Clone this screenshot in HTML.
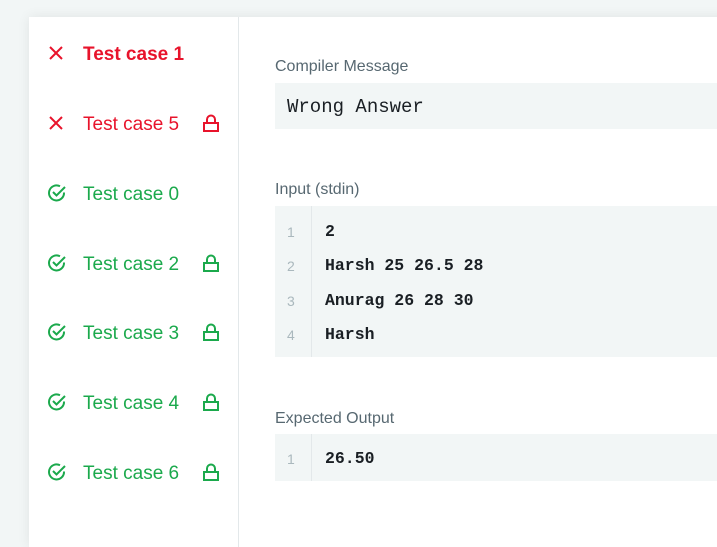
<!DOCTYPE html>
<html><head><style>
body{margin:0;width:717px;height:531px;background:#f2f6f6;font-family:"Liberation Sans",sans-serif;overflow:hidden;position:relative}
.card{position:absolute;left:29px;top:17px;width:700px;height:530px;background:#fff;box-shadow:0 0 12px rgba(0,0,0,.08)}
.side{position:absolute;left:0;top:0;width:209px;height:100%;border-right:1px solid #e3e8ea}
.row{position:absolute;left:0;height:30px;display:flex;align-items:center;font-size:19px}
.row svg.i{position:absolute;left:18px}
.row span{position:absolute;left:54px;top:6px;white-space:nowrap}
.row svg.l{position:absolute;left:173px}
.red{color:#e8132b}.grn{color:#1ba94c}
.lbl{position:absolute;left:246px;font-size:16px;color:#576871}
.box{position:absolute;left:246px;width:460px;background:#f2f6f6}
.mono{font-family:"Liberation Mono",monospace;font-weight:bold;font-size:16.5px;color:#1a1f24}
.ln{position:absolute;left:0;width:36px;border-right:1px solid #e3e8ea;height:100%}
.line{position:absolute;left:0;height:34px;line-height:34px;width:100%}
.line b{position:absolute;left:12px;font-family:"Liberation Sans",sans-serif;font-weight:normal;font-size:14px;color:#aab8bd}
.line i{position:absolute;left:50px;font-style:normal}
</style></head><body>
<div class="card">
<div class="side">
<div class="row red" style="top:21px"><svg class="i" width="18" height="18" viewBox="0 0 18 18"><path d="M3 3L15 15M15 3L3 15" stroke="#e8132b" stroke-width="2"/></svg><span style="font-weight:bold">Test case 1</span></div>
<div class="row red" style="top:91px"><svg class="i" width="18" height="18" viewBox="0 0 18 18"><path d="M3 3L15 15M15 3L3 15" stroke="#e8132b" stroke-width="2"/></svg><span>Test case 5</span><svg class="l" width="18" height="20" viewBox="0 0 18 20"><path d="M5 10V6.5a4 4 0 0 1 8 0V10M2 10h14v8H2z" fill="none" stroke="#e8132b" stroke-width="2"/></svg></div>
<div class="row grn" style="top:161px"><svg class="i" width="20" height="20" viewBox="0 0 20 20"><path d="M17 9.5A7.5 7.5 0 1 1 13 3.3" fill="none" stroke="#1ba94c" stroke-width="2"/><path d="M6 9l3.5 3.5L18 4" fill="none" stroke="#1ba94c" stroke-width="2"/></svg><span>Test case 0</span></div>
<div class="row grn" style="top:231px"><svg class="i" width="20" height="20" viewBox="0 0 20 20"><path d="M17 9.5A7.5 7.5 0 1 1 13 3.3" fill="none" stroke="#1ba94c" stroke-width="2"/><path d="M6 9l3.5 3.5L18 4" fill="none" stroke="#1ba94c" stroke-width="2"/></svg><span>Test case 2</span><svg class="l" width="18" height="20" viewBox="0 0 18 20"><path d="M5 10V6.5a4 4 0 0 1 8 0V10M2 10h14v8H2z" fill="none" stroke="#1ba94c" stroke-width="2"/></svg></div>
<div class="row grn" style="top:300px"><svg class="i" width="20" height="20" viewBox="0 0 20 20"><path d="M17 9.5A7.5 7.5 0 1 1 13 3.3" fill="none" stroke="#1ba94c" stroke-width="2"/><path d="M6 9l3.5 3.5L18 4" fill="none" stroke="#1ba94c" stroke-width="2"/></svg><span>Test case 3</span><svg class="l" width="18" height="20" viewBox="0 0 18 20"><path d="M5 10V6.5a4 4 0 0 1 8 0V10M2 10h14v8H2z" fill="none" stroke="#1ba94c" stroke-width="2"/></svg></div>
<div class="row grn" style="top:370px"><svg class="i" width="20" height="20" viewBox="0 0 20 20"><path d="M17 9.5A7.5 7.5 0 1 1 13 3.3" fill="none" stroke="#1ba94c" stroke-width="2"/><path d="M6 9l3.5 3.5L18 4" fill="none" stroke="#1ba94c" stroke-width="2"/></svg><span>Test case 4</span><svg class="l" width="18" height="20" viewBox="0 0 18 20"><path d="M5 10V6.5a4 4 0 0 1 8 0V10M2 10h14v8H2z" fill="none" stroke="#1ba94c" stroke-width="2"/></svg></div>
<div class="row grn" style="top:440px"><svg class="i" width="20" height="20" viewBox="0 0 20 20"><path d="M17 9.5A7.5 7.5 0 1 1 13 3.3" fill="none" stroke="#1ba94c" stroke-width="2"/><path d="M6 9l3.5 3.5L18 4" fill="none" stroke="#1ba94c" stroke-width="2"/></svg><span>Test case 6</span><svg class="l" width="18" height="20" viewBox="0 0 18 20"><path d="M5 10V6.5a4 4 0 0 1 8 0V10M2 10h14v8H2z" fill="none" stroke="#1ba94c" stroke-width="2"/></svg></div>
</div>
<div class="lbl" style="top:41px">Compiler Message</div>
<div class="box" style="top:66px;height:46px"><div style="position:absolute;left:12px;top:13px;font-family:'Liberation Mono',monospace;font-size:19px;color:#1a1f24">Wrong Answer</div></div>
<div class="lbl" style="top:164px">Input (stdin)</div>
<div class="box mono" style="top:189px;height:151px"><div class="ln"></div>
<div class="line" style="top:9px"><b>1</b><i>2</i></div>
<div class="line" style="top:43px"><b>2</b><i>Harsh 25 26.5 28</i></div>
<div class="line" style="top:78px"><b>3</b><i>Anurag 26 28 30</i></div>
<div class="line" style="top:112px"><b>4</b><i>Harsh</i></div>
</div>
<div class="lbl" style="top:393px">Expected Output</div>
<div class="box mono" style="top:417px;height:47px"><div class="ln"></div>
<div class="line" style="top:8px"><b>1</b><i>26.50</i></div>
</div>
</div>
</body></html>
